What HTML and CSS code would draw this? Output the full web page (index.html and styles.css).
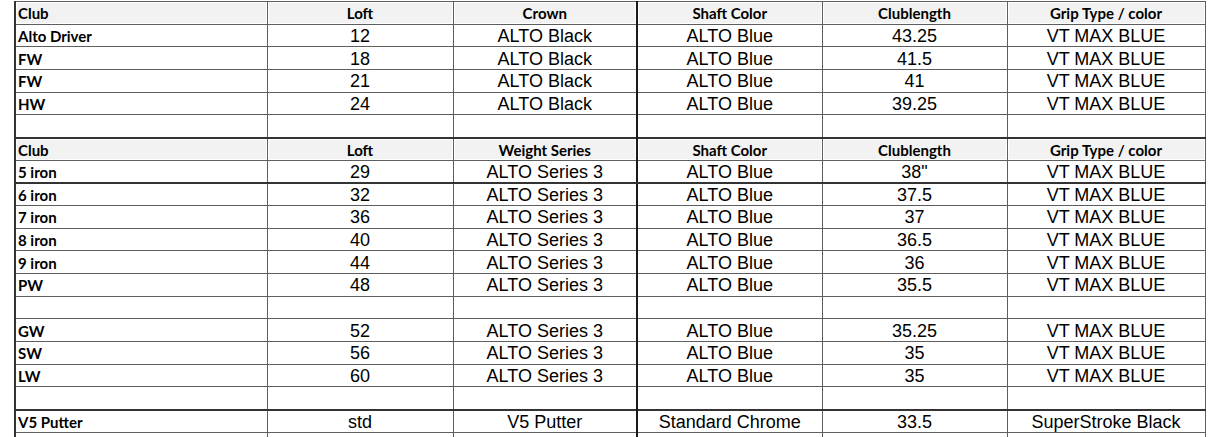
FILE: index.html
```html
<!DOCTYPE html>
<html>
<head>
<meta charset="utf-8">
<link rel="stylesheet" href="styles.css">
</head>
<body>
<table class="sheet">
  <colgroup>
    <col class="c-club"><col class="c-loft"><col class="c-crown"><col class="c-shaft"><col class="c-len"><col class="c-grip">
  </colgroup>
  <tbody>
    <tr class="head">
      <td class="name">Club</td><td>Loft</td><td>Crown</td><td class="sep">Shaft Color</td><td>Clublength</td><td>Grip Type / color</td>
    </tr>
    <tr><td class="name">Alto Driver</td><td>12</td><td>ALTO Black</td><td class="sep">ALTO Blue</td><td>43.25</td><td>VT MAX BLUE</td></tr>
    <tr><td class="name">FW</td><td>18</td><td>ALTO Black</td><td class="sep">ALTO Blue</td><td>41.5</td><td>VT MAX BLUE</td></tr>
    <tr><td class="name">FW</td><td>21</td><td>ALTO Black</td><td class="sep">ALTO Blue</td><td>41</td><td>VT MAX BLUE</td></tr>
    <tr><td class="name">HW</td><td>24</td><td>ALTO Black</td><td class="sep">ALTO Blue</td><td>39.25</td><td>VT MAX BLUE</td></tr>
    <tr class="blank"><td></td><td></td><td></td><td class="sep"></td><td></td><td></td></tr>
    <tr class="head dark-top">
      <td class="name">Club</td><td>Loft</td><td>Weight Series</td><td class="sep">Shaft Color</td><td>Clublength</td><td>Grip Type / color</td>
    </tr>
    <tr class="dark-bottom"><td class="name">5 iron</td><td>29</td><td>ALTO Series 3</td><td class="sep">ALTO Blue</td><td>38"</td><td>VT MAX BLUE</td></tr>
    <tr><td class="name">6 iron</td><td>32</td><td>ALTO Series 3</td><td class="sep">ALTO Blue</td><td>37.5</td><td>VT MAX BLUE</td></tr>
    <tr><td class="name">7 iron</td><td>36</td><td>ALTO Series 3</td><td class="sep">ALTO Blue</td><td>37</td><td>VT MAX BLUE</td></tr>
    <tr><td class="name">8 iron</td><td>40</td><td>ALTO Series 3</td><td class="sep">ALTO Blue</td><td>36.5</td><td>VT MAX BLUE</td></tr>
    <tr><td class="name">9 iron</td><td>44</td><td>ALTO Series 3</td><td class="sep">ALTO Blue</td><td>36</td><td>VT MAX BLUE</td></tr>
    <tr><td class="name">PW</td><td>48</td><td>ALTO Series 3</td><td class="sep">ALTO Blue</td><td>35.5</td><td>VT MAX BLUE</td></tr>
    <tr class="blank"><td></td><td></td><td></td><td class="sep"></td><td></td><td></td></tr>
    <tr><td class="name">GW</td><td>52</td><td>ALTO Series 3</td><td class="sep">ALTO Blue</td><td>35.25</td><td>VT MAX BLUE</td></tr>
    <tr><td class="name">SW</td><td>56</td><td>ALTO Series 3</td><td class="sep">ALTO Blue</td><td>35</td><td>VT MAX BLUE</td></tr>
    <tr><td class="name">LW</td><td>60</td><td>ALTO Series 3</td><td class="sep">ALTO Blue</td><td>35</td><td>VT MAX BLUE</td></tr>
    <tr class="blank"><td></td><td></td><td></td><td class="sep"></td><td></td><td></td></tr>
    <tr class="dark-top"><td class="name">V5 Putter</td><td>std</td><td>V5 Putter</td><td class="sep">Standard Chrome</td><td>33.5</td><td>SuperStroke Black</td></tr>
    <tr class="blank"><td></td><td></td><td></td><td class="sep"></td><td></td><td></td></tr>
  </tbody>
</table>
</body>
</html>
```
FILE: styles.css
```css
html, body {
  margin: 0;
  padding: 0;
  background: #ffffff;
}

body {
  padding: 1px 0 0 14px;
  overflow: hidden;
}

.sheet {
  border-collapse: collapse;
  table-layout: fixed;
  width: 1190px;
  font-family: "Liberation Sans", Arial, sans-serif;
  font-size: 18px;
  color: #000;
}

.c-club { width: 252px; }
.c-loft { width: 186px; }
.c-crown { width: 184px; }
.c-shaft { width: 185px; }
.c-len { width: 185px; }
.c-grip { width: 198px; }

.sheet tr {
  height: 22.68px;
}

.sheet td {
  border: 1px solid #5e5e5e;
  padding: 1px 0 0 0;
  text-align: center;
  vertical-align: middle;
  line-height: 20px;
  white-space: nowrap;
  overflow: hidden;
}

.sheet td:first-child {
  border-left: 2px solid #333;
}

.sheet td.sep {
  border-left: 2px solid #1a1a1a;
}

.sheet td.name {
  text-align: left;
  padding-left: 2px;
  font-family: Lato, "Open Sans", sans-serif;
  font-weight: 700;
  font-size: 15px;
}

.head td {
  background: #f2f2f2;
  box-shadow: inset 0 0 0 1px #ffffff;
  font-family: Lato, "Open Sans", sans-serif;
  font-weight: 700;
  font-size: 15px;
}

.dark-top td {
  border-top: 2px solid #333;
}

.dark-bottom td {
  border-bottom: 2px solid #333;
}
```
